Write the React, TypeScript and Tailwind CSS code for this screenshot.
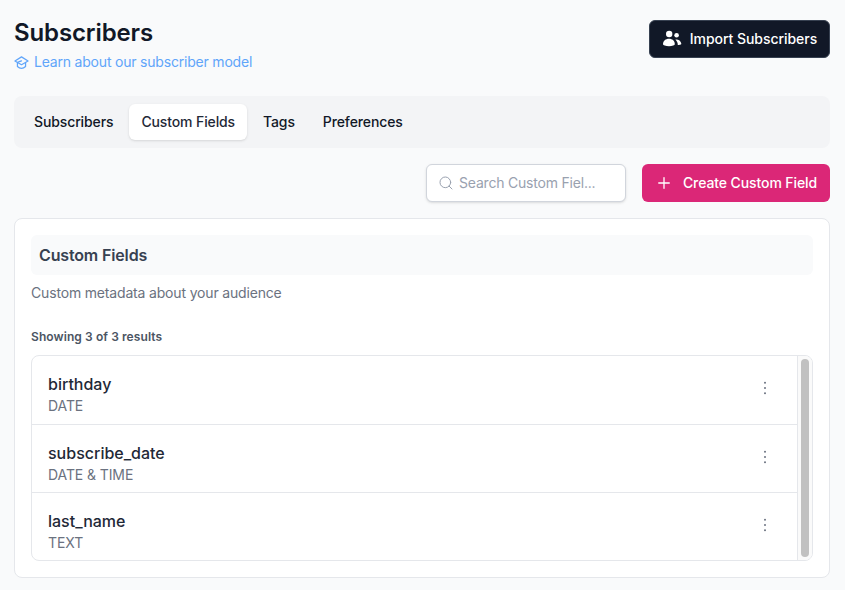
import React from "react";
import { Search, Plus } from "lucide-react";

const rows = [
  { name: "birthday", type: "DATE", h: "h-[69px]" },
  { name: "subscribe_date", type: "DATE & TIME", h: "h-[68px]" },
  { name: "last_name", type: "TEXT", h: "h-[67px]" },
];

function Dots() {
  return (
    <svg width="16" height="16" viewBox="0 0 16 16" className="mt-2 text-[#6b7280]" fill="currentColor">
      <circle cx="8" cy="2.8" r="1" />
      <circle cx="8" cy="8" r="1" />
      <circle cx="8" cy="13.2" r="1" />
    </svg>
  );
}

function Users() {
  return (
    <svg width="20" height="20" viewBox="0 0 20 20" fill="white">
      <circle cx="7.2" cy="5" r="3.2" />
      <path d="M1 15.3C1 11.8 3.600 9.700 7 9.700s5.800 2.100 5.800 5.600c0 1.100-2.400 1.900-5.800 1.900S1 16.400 1 15.300z" />
      <circle cx="14.6" cy="6.3" r="2.3" />
      <path d="M13.400 10.600c2.600-.5 5.400 1 6 4.300-.6.6-2 .9-3.600 1 0-2-.9-3.800-2.400-5.300z" />
    </svg>
  );
}

function AcademicCap() {
  return (
    <svg width="15" height="15" viewBox="0 0 24 24" fill="none" stroke="currentColor" strokeWidth="2" strokeLinecap="round" strokeLinejoin="round">
      <path d="M1.500 9.500 12 3l10.500 6.500L12 15.500z" />
      <path d="M5.500 12v6.500C7.500 20.500 9.700 21.500 12 21.500s4.500-1 6.500-3V12" />
      <path d="M5.500 12C8 10.500 10 10 12 9.500" />
    </svg>
  );
}

export default function App() {
  return (
    <div className="w-[845px] h-[590px] overflow-hidden bg-[#f9fafb] pl-[14px] pr-[15px] text-gray-900 font-['Inter',sans-serif]">
      <div className="flex justify-between h-[96px]">
        <div className="pt-[17px]">
          <h1 className="text-2xl font-semibold leading-[32px] tracking-[-0.005em] text-[#111827]">Subscribers</h1>
          <a className="mt-[3px] flex items-center gap-[5px] text-sm leading-5 tracking-[-0.2px] text-[#60a5fa]">
            <AcademicCap />
            Learn about our subscriber model
          </a>
        </div>
        <button className="mt-[20px] h-[38px] w-[181px] flex items-center justify-center gap-2 rounded-md border border-[#374151] bg-[#111827] text-sm font-medium tracking-[-0.05px] text-white">
          <Users />
          Import Subscribers
        </button>
      </div>
      <div className="flex h-[52px] items-center gap-1 rounded-lg bg-[#f3f4f6] px-2 text-sm font-medium tracking-[-0.12px]">
        <span className="px-3 py-2 text-[#111827]">Subscribers</span>
        <span className="rounded-md bg-white px-3 py-2 text-[#1f2937] shadow">Custom Fields</span>
        <span className="px-3 py-2 text-[#111827]">Tags</span>
        <span className="px-3 py-2 text-[#111827]">Preferences</span>
      </div>
      <div className="mt-4 flex justify-end gap-4">
        <div className="flex h-[38px] w-[200px] items-center gap-[5px] rounded-md border border-gray-300 bg-white pl-[11px] text-sm tracking-[-0.2px] text-gray-400 shadow-sm">
          <Search size={16} strokeWidth={1.5} className="text-gray-400" />
          <span>Search Custom Fiel...</span>
        </div>
        <button className="flex h-[38px] w-[188px] items-center justify-center gap-[10px] rounded-md bg-[#db2777] text-sm font-medium tracking-[-0.1px] text-white">
          <Plus size={18} strokeWidth={1.75} />
          Create Custom Field
        </button>
      </div>
      <div className="mt-4 h-[360px] rounded-lg border border-gray-200 bg-white p-4">
        <div className="flex h-10 items-center rounded-md bg-[#f9fafb] px-2 text-base font-semibold tracking-[-0.15px] text-[#374151]">Custom Fields</div>
        <p className="mt-2 text-sm leading-5 tracking-[-0.17px] text-[#6b7280]">Custom metadata about your audience</p>
        <p className="mt-[26px] text-xs font-semibold leading-4 tracking-[0.09px] text-[#4b5563]">Showing 3 of 3 results</p>
        <div className="mt-[10px] flex h-[206px] overflow-hidden rounded-lg border border-gray-200">
          <div className="flex-1 divide-y divide-gray-200">
            {rows.map((r) => (
              <div key={r.name} className={`flex items-start justify-between pl-4 pr-[24px] pt-4 ${r.h}`}>
                <div>
                  <div className="text-base font-medium leading-6 text-[#1f2937]">{r.name}</div>
                  <div className="text-sm leading-5 tracking-[-0.1px] text-[#6b7280]">{r.type}</div>
                </div>
                <Dots />
              </div>
            ))}
          </div>
          <div className="w-[15px] border-l border-gray-200 bg-[#fafafa] px-[3px] py-[3px]">
            <div className="h-full rounded-full bg-[#c1c1c1]" />
          </div>
        </div>
      </div>
    </div>
  );
}
